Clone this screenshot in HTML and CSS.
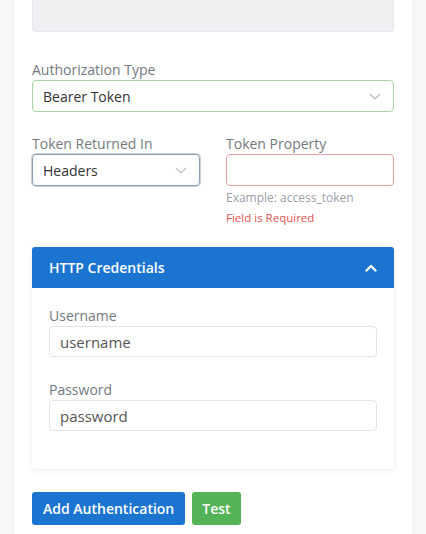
FILE: index.html
```html
<!DOCTYPE html>
<html lang="en">
<head>
<meta charset="utf-8">
<link rel="stylesheet" href="styles.css">
</head>
<body>
<div class="panel">
  <div class="textarea-stub"></div>

  <div class="field first">
    <label class="label">Authorization Type</label>
    <div class="select valid">
      <span>Bearer Token</span>
      <svg class="chev" width="12" height="7" viewBox="0 0 12 7"><path d="M1 1l5 5 5-5" fill="none" stroke="#b8bcc2" stroke-width="1.2"/></svg>
    </div>
  </div>

  <div class="row">
    <div class="field col">
      <label class="label">Token Returned In</label>
      <div class="select focus">
        <span>Headers</span>
        <svg class="chev" width="12" height="7" viewBox="0 0 12 7"><path d="M1 1l5 5 5-5" fill="none" stroke="#b8bcc2" stroke-width="1.2"/></svg>
      </div>
    </div>
    <div class="field col">
      <label class="label">Token Property</label>
      <div class="input invalid"></div>
      <div class="hint">Example: access_token</div>
      <div class="error">Field is Required</div>
    </div>
  </div>

  <div class="card">
    <div class="card-head">
      <span>HTTP Credentials</span>
      <svg width="12" height="8" viewBox="0 0 12 8"><path d="M1.5 6.5l4.5-4.5 4.5 4.5" fill="none" stroke="#fff" stroke-width="2.4" stroke-linecap="round" stroke-linejoin="round"/></svg>
    </div>
    <div class="card-body">
      <div class="field">
        <label class="label">Username</label>
        <div class="input plain">username</div>
      </div>
      <div class="field spaced">
        <label class="label">Password</label>
        <div class="input plain">password</div>
      </div>
    </div>
  </div>

  <div class="actions">
    <button class="btn primary">Add Authentication</button>
    <button class="btn success">Test</button>
  </div>
</div>
</body>
</html>
```
FILE: styles.css
```css
* { box-sizing: border-box; }
body {
  margin: 0;
  background: #f7f7f8;
  font-family: "Open Sans", "DejaVu Sans", sans-serif;
  color: #333;
}
.panel {
  margin: 0 14px;
  background: #fff;
  padding: 0 18px 12px;
  min-height: 534px;
  box-shadow: 0 0 3px rgba(0,0,0,0.04);
}
.textarea-stub {
  height: 32px;
  background: #eff0f2;
  border: 1px solid #e6e8eb;
  border-top: none;
  border-radius: 0 0 4px 4px;
}
.field { display: flex; flex-direction: column; }
.field.first { margin-top: 28px; }
.label {
  font-size: 14px;
  line-height: 20px;
  color: #74797f;
}
.select, .input {
  height: 32px;
  border: 1px solid #ced4da;
  border-radius: 4px;
  display: flex;
  align-items: center;
  justify-content: space-between;
  padding: 0 12px 0 10px;
  font-size: 14px;
  color: #333;
}
.select.valid { border-color: #a8d5a4; }
.select.focus {
  border-color: #8f9cb0;
  box-shadow: 0 0 0 1px #c9d0db;
}
.input.invalid { border-color: #e8a2a2; }
.row {
  display: grid;
  grid-template-columns: 1fr 1fr;
  column-gap: 26px;
  margin-top: 22px;
}
.hint {
  font-size: 12px;
  line-height: 14px;
  color: #9aa0a8;
  margin-top: 5px;
}
.error {
  font-size: 11.5px;
  line-height: 14px;
  color: #e05252;
  margin-top: 6px;
}
.card {
  margin-top: 22px;
  border-radius: 4px;
  box-shadow: 0 1px 6px rgba(0,0,0,0.08);
  background: #fff;
}
.card-head {
  height: 41px;
  background: #1b74d0;
  color: #fff;
  border-radius: 3px 3px 0 0;
  display: flex;
  align-items: center;
  justify-content: space-between;
  padding: 0 17px 0 17px;
  font-size: 14px;
  font-weight: 600;
}
.card-body {
  padding: 18px 17px 38px;
}
.input.plain {
  height: 31px;
  border-color: #e1e4e8;
  font-size: 15px;
  color: #555;
}
.field.spaced { margin-top: 23px; }
.actions {
  display: flex;
  gap: 7px;
  margin-top: 23px;
}
.btn {
  height: 33px;
  border: none;
  border-radius: 3px;
  color: #fff;
  font-family: inherit;
  font-size: 14px;
  font-weight: 600;
  padding: 0 11px;
}
.btn.primary { background: #1b74d0; }
.btn.success { background: #53b356; padding: 0 10px; }
```
